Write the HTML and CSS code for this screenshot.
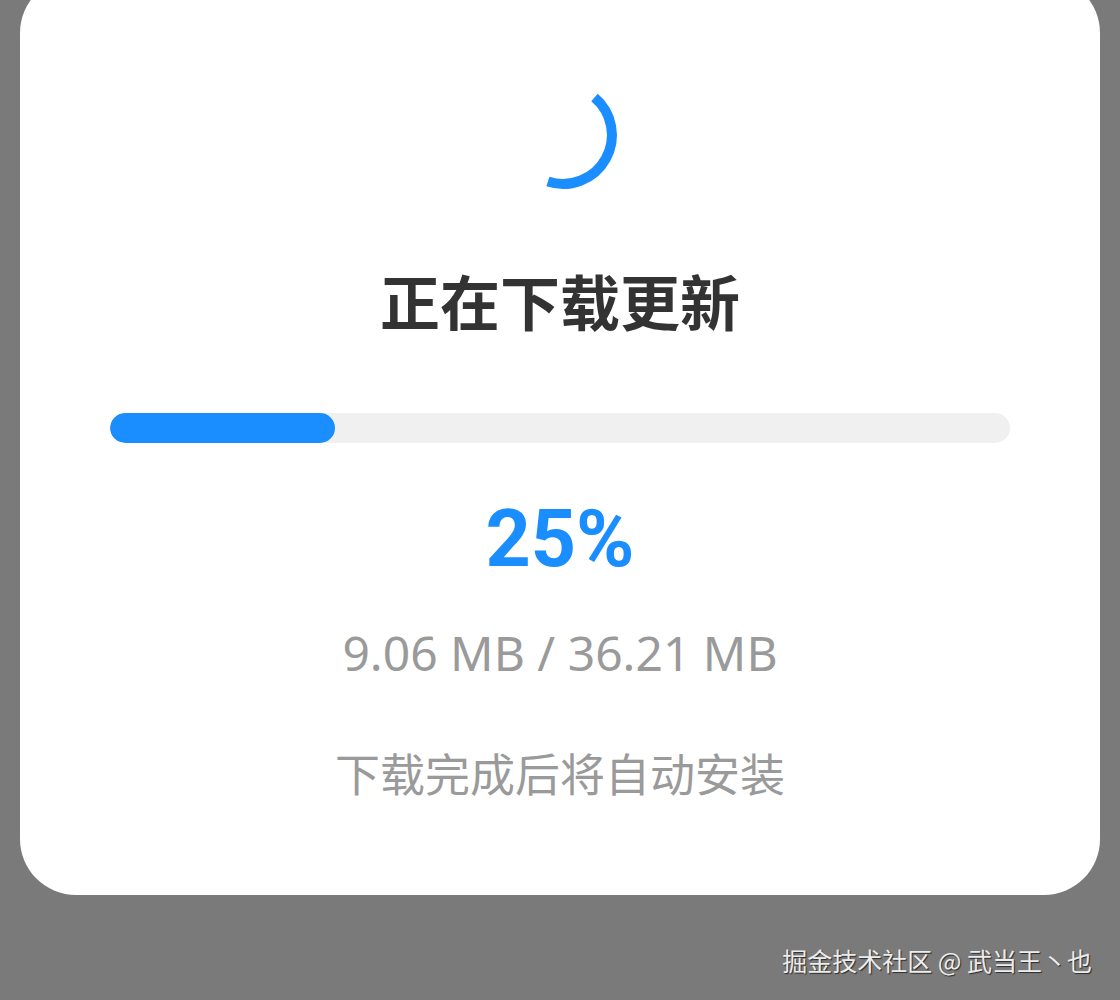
FILE: index.html
```html
<!DOCTYPE html>
<html lang="zh-CN">
<head>
<meta charset="utf-8">
<title>正在下载更新</title>
<link rel="stylesheet" href="styles.css">
</head>
<body>
<div class="screen">
  <div class="card">
    <svg class="spinner" width="120" height="120" viewBox="0 0 120 120" aria-hidden="true">
      <path d="M94.5 22.5 A49 49 0 0 1 47.9 106.6" fill="none" stroke="#1a8dff" stroke-width="10"/>
    </svg>
    <h1 class="title">正在下载更新</h1>
    <div class="track"><div class="fill" style="width:25%"></div></div>
    <div class="percent">25%</div>
    <div class="size">9.06 MB / 36.21 MB</div>
    <div class="note">下载完成后将自动安装</div>
  </div>
  <div class="watermark">掘金技术社区 @ 武当王丶也</div>
</div>
</body>
</html>
```
FILE: styles.css
```css
html, body {
  margin: 0;
  padding: 0;
}
body {
  background: #7a7a7a;
  font-family: "Noto Sans", "Noto Sans CJK SC", sans-serif;
  overflow: hidden;
}
.screen {
  width: 1120px;
  height: 1000px;
  display: flex;
  flex-direction: column;
}
.card {
  margin: -23px 20px 0;
  height: 918px;
  box-sizing: border-box;
  background: #fff;
  border-radius: 56px;
  padding: 98px 90px 0;
  display: flex;
  flex-direction: column;
  align-items: center;
}
.spinner {
  display: block;
  width: 120px;
  height: 120px;
}
.title {
  margin: 65px 0 0;
  font-family: "Noto Sans CJK SC", sans-serif;
  font-size: 60px;
  line-height: 80px;
  font-weight: 700;
  color: #333;
}
.track {
  margin-top: 73px;
  align-self: stretch;
  height: 30px;
  border-radius: 15px;
  background: #f0f0f0;
  overflow: hidden;
}
.fill {
  height: 100%;
  border-radius: 15px;
  background: #1a8dff;
}
.percent {
  margin-top: 46px;
  font-family: Roboto, sans-serif;
  font-size: 79px;
  line-height: 100px;
  font-weight: 700;
  color: #1a8dff;
}
.size {
  margin-top: 34px;
  font-family: "Noto Sans", sans-serif;
  font-size: 48px;
  line-height: 60px;
  color: #9a9a9a;
}
.note {
  margin-top: 60px;
  font-family: "Noto Sans CJK SC", sans-serif;
  font-size: 45px;
  line-height: 60px;
  color: #9a9a9a;
}
.watermark {
  margin-top: 50px;
  padding-right: 28px;
  text-align: right;
  font-family: "Noto Sans CJK SC", sans-serif;
  font-size: 25px;
  line-height: 30px;
  color: #ececec;
  text-shadow: 1px 1px 1px #2a2a2a;
}
```
